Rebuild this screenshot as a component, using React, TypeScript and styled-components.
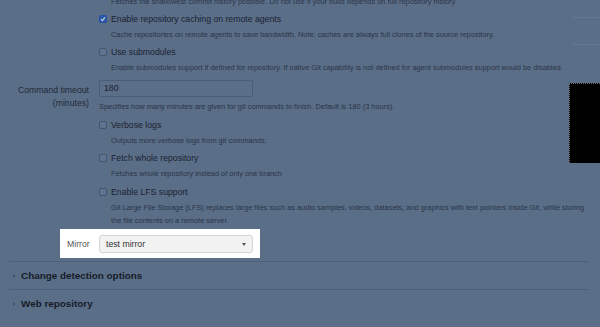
import React from 'react';
import styled, { createGlobalStyle } from 'styled-components';

const GlobalStyle = createGlobalStyle`
    html, body {
        margin: 0;
        padding: 0;
        background: #5a6e88;
    }
    body {
        font-family: 'Liberation Sans', Arial, Helvetica, sans-serif;
        color: #1b2230;
        overflow: hidden;
    }
`;

const Page = styled.div`
    position: relative;
    width: 600px;
    height: 327px;
    overflow: hidden;
`;

const Form = styled.div`
    display: flex;
    flex-direction: column;
    margin-top: -5px;
`;

const Row = styled.div<{ $top?: number }>`
    display: grid;
    grid-template-columns: 89px 1fr;
    column-gap: 10px;
    margin-top: ${(p) => p.$top ?? 0}px;
`;

const FieldLabel = styled.div<{ $pad?: number }>`
    text-align: right;
    font-size: 8.7px;
    line-height: 13px;
    color: #222a38;
    padding-top: ${(p) => p.$pad ?? 0}px;
`;

const FieldBody = styled.div`
    display: flex;
    flex-direction: column;
`;

const Option = styled.label`
    display: flex;
    align-items: center;
    gap: 4px;
    height: 14px;
`;

const Box = styled.span<{ $checked?: boolean }>`
    box-sizing: border-box;
    width: 8px;
    height: 8px;
    border-radius: 2px;
    border: 1px solid ${(p) => (p.$checked ? '#23509f' : '#44556d')};
    background: ${(p) => (p.$checked ? '#2a59ab' : '#5f7390')};
    display: flex;
    align-items: center;
    justify-content: center;
`;

const OptionText = styled.span`
    font-size: 8.7px;
    color: #1b2230;
`;

const Hint = styled.div<{ $indent?: boolean; $top?: number }>`
    font-size: 7.4px;
    line-height: 13px;
    color: #2b3547;
    padding-left: ${(p) => (p.$indent ? 12 : 0)}px;
    margin-top: ${(p) => p.$top ?? 2}px;
    max-width: 478px;
    white-space: normal;
`;

const TextInput = styled.div`
    box-sizing: border-box;
    width: 154px;
    height: 17px;
    border: 1px solid #4b5c74;
    border-radius: 2px;
    padding-left: 4px;
    font-size: 8.7px;
    line-height: 15px;
    color: #1b2230;
`;

const Spotlight = styled.div`
    position: relative;
    z-index: 2;
    box-sizing: border-box;
    width: 200px;
    margin: 2px 0 0 60px;
    padding: 6px 7px 5px;
    background: #ffffff;
    display: grid;
    grid-template-columns: 32px 1fr;
    align-items: center;
`;

const SpotLabel = styled.span`
    font-size: 8.7px;
    color: #555;
`;

const Select = styled.div`
    box-sizing: border-box;
    height: 18px;
    border: 1px solid #d4d4d4;
    border-radius: 3px;
    background: #f2f2f2;
    display: flex;
    align-items: center;
    justify-content: space-between;
    padding: 0 6px 0 6px;
    font-size: 8.7px;
    color: #333;
`;

const Caret = styled.span`
    width: 0;
    height: 0;
    border-left: 2.5px solid transparent;
    border-right: 2.5px solid transparent;
    border-top: 3px solid #555;
`;

const Section = styled.div<{ $top?: number }>`
    margin: ${(p) => p.$top ?? 0}px 12px 0 9px;
    border-top: 1px solid #4e5f77;
    height: 27px;
    display: flex;
    align-items: center;
    gap: 5px;
    padding-left: 4px;
`;

const Arrow = styled.span`
    width: 0;
    height: 0;
    border-top: 2px solid transparent;
    border-bottom: 2px solid transparent;
    border-left: 3px solid #44546b;
`;

const SectionTitle = styled.span`
    font-size: 9.9px;
    font-weight: bold;
    color: #161c27;
`;

const SideRule = styled.div<{ $y: number }>`
    position: absolute;
    left: 572px;
    right: 0;
    top: ${(p) => p.$y}px;
    border-top: 1px solid #66788f;
`;

const Blackout = styled.div`
    position: absolute;
    left: 569px;
    top: 83px;
    width: 31px;
    height: 80px;
    background: #000;
    border-left: 1px dotted #666;
    border-top: 1px dotted #666;
    box-sizing: border-box;
`;

const Check = () => (
    <svg width="6" height="6" viewBox="0 0 6 6">
        <path d="M1 3.2 L2.4 4.6 L5 1.4" fill="none" stroke="#c9d1de" strokeWidth="1.1" />
    </svg>
);

type Opt = { label: string; hint: string; checked?: boolean };

const OptionBlock = ({ label, hint, checked, top }: Opt & { top: number }) => (
    <Row $top={top}>
        <div />
        <FieldBody>
            <Option>
                <Box $checked={checked}>{checked && <Check />}</Box>
                <OptionText>{label}</OptionText>
            </Option>
            <Hint $indent>{hint}</Hint>
        </FieldBody>
    </Row>
);

export default function App() {
    return (
        <Page>
            <GlobalStyle />
            <Form>
                <Row>
                    <div />
                    <Hint $indent $top={0}>
                        Fetches the shallowest commit history possible. Do not use if your build depends on full repository history.
                    </Hint>
                </Row>
                <OptionBlock
                    top={4}
                    checked
                    label="Enable repository caching on remote agents"
                    hint="Cache repositories on remote agents to save bandwidth. Note: caches are always full clones of the source repository."
                />
                <OptionBlock
                    top={4}
                    label="Use submodules"
                    hint="Enable submodules support if defined for repository. If native Git capability is not defined for agent submodules support would be disabled."
                />
                <Row $top={6}>
                    <FieldLabel $pad={4}>
                        Command timeout
                        <br />
                        (minutes)
                    </FieldLabel>
                    <FieldBody>
                        <TextInput>180</TextInput>
                        <Hint $top={3}>Specifies how many minutes are given for git commands to finish. Default is 180 (3 hours).</Hint>
                    </FieldBody>
                </Row>
                <OptionBlock top={5} label="Verbose logs" hint="Outputs more verbose logs from git commands." />
                <OptionBlock top={4} label="Fetch whole repository" hint="Fetches whole repository instead of only one branch" />
                <OptionBlock
                    top={5}
                    label="Enable LFS support"
                    hint="Git Large File Storage (LFS) replaces large files such as audio samples, videos, datasets, and graphics with text pointers inside Git, while storing the file contents on a remote server."
                />
                <Spotlight>
                    <SpotLabel>Mirror</SpotLabel>
                    <Select>
                        test mirror
                        <Caret />
                    </Select>
                </Spotlight>
                <Section $top={3}>
                    <Arrow />
                    <SectionTitle>Change detection options</SectionTitle>
                </Section>
                <Section>
                    <Arrow />
                    <SectionTitle>Web repository</SectionTitle>
                </Section>
            </Form>
            <SideRule $y={17} />
            <SideRule $y={44} />
            <Blackout />
        </Page>
    );
}
